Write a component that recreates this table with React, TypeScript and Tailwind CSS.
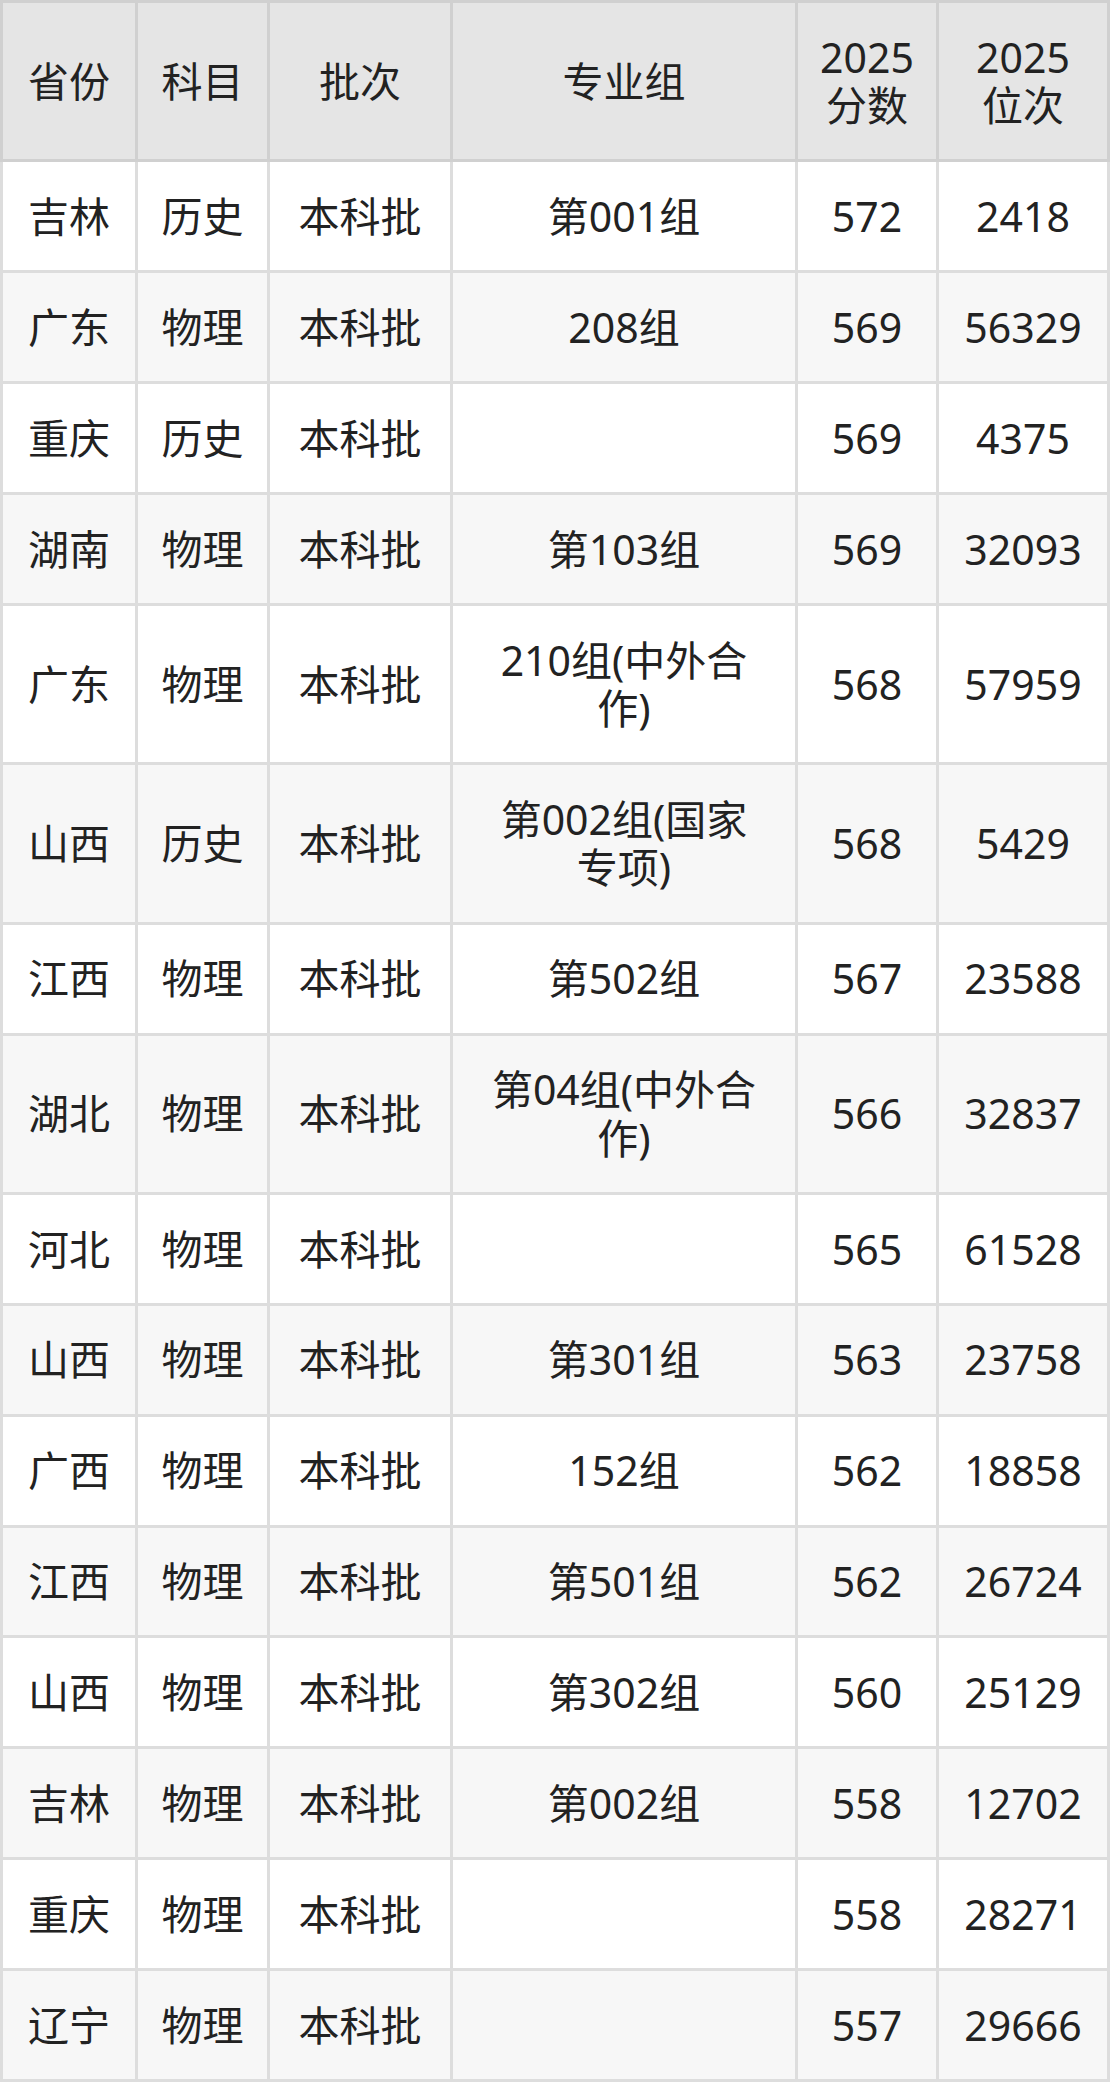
import React from "react";

type Row = { p: string; s: string; b: string; g: string[]; score: string; rank: string };

const rows: Row[] = [
  { p: "吉林", s: "历史", b: "本科批", g: ["第001组"], score: "572", rank: "2418" },
  { p: "广东", s: "物理", b: "本科批", g: ["208组"], score: "569", rank: "56329" },
  { p: "重庆", s: "历史", b: "本科批", g: [], score: "569", rank: "4375" },
  { p: "湖南", s: "物理", b: "本科批", g: ["第103组"], score: "569", rank: "32093" },
  { p: "广东", s: "物理", b: "本科批", g: ["210组(中外合", "作)"], score: "568", rank: "57959" },
  { p: "山西", s: "历史", b: "本科批", g: ["第002组(国家", "专项)"], score: "568", rank: "5429" },
  { p: "江西", s: "物理", b: "本科批", g: ["第502组"], score: "567", rank: "23588" },
  { p: "湖北", s: "物理", b: "本科批", g: ["第04组(中外合", "作)"], score: "566", rank: "32837" },
  { p: "河北", s: "物理", b: "本科批", g: [], score: "565", rank: "61528" },
  { p: "山西", s: "物理", b: "本科批", g: ["第301组"], score: "563", rank: "23758" },
  { p: "广西", s: "物理", b: "本科批", g: ["152组"], score: "562", rank: "18858" },
  { p: "江西", s: "物理", b: "本科批", g: ["第501组"], score: "562", rank: "26724" },
  { p: "山西", s: "物理", b: "本科批", g: ["第302组"], score: "560", rank: "25129" },
  { p: "吉林", s: "物理", b: "本科批", g: ["第002组"], score: "558", rank: "12702" },
  { p: "重庆", s: "物理", b: "本科批", g: [], score: "558", rank: "28271" },
  { p: "辽宁", s: "物理", b: "本科批", g: [], score: "557", rank: "29666" },
];

const head = "flex flex-col items-center justify-center text-center whitespace-nowrap bg-[#e5e5e5] border-[#d0d0d0] border-t-[3px] border-b-[3px] border-r-[3px] py-[29.7px]";
const cell = "flex flex-col items-center justify-center text-center whitespace-nowrap border-[#dddddd] border-b-[3px] border-r-[3px] py-[29.7px]";

export default function App() {
  return (
    <div
      className="w-[1110px] bg-white text-[#222222] text-[41px] leading-[48.5px]"
      style={{ fontFamily: "'Noto Sans', 'Noto Sans CJK SC', sans-serif" }}
    >
      <div className="grid grid-cols-[138px_132px_183px_345px_141px_171px]">
        <div className={head + " border-l-[3px]"}>省份</div>
        <div className={head}>科目</div>
        <div className={head}>批次</div>
        <div className={head}>专业组</div>
        <div className={head}>
          <span>2025</span>
          <span>分数</span>
        </div>
        <div className={head}>
          <span>2025</span>
          <span>位次</span>
        </div>
        {rows.map((r, i) => {
          const bg = i % 2 === 1 ? " bg-[#f7f7f7]" : " bg-white";
          return (
            <React.Fragment key={i}>
              <div className={cell + bg + " border-l-[3px]"}>{r.p}</div>
              <div className={cell + bg}>{r.s}</div>
              <div className={cell + bg}>{r.b}</div>
              <div className={cell + bg}>
                {r.g.map((l, j) => (
                  <span key={j}>{l}</span>
                ))}
              </div>
              <div className={cell + bg}>{r.score}</div>
              <div className={cell + bg}>{r.rank}</div>
            </React.Fragment>
          );
        })}
      </div>
    </div>
  );
}
